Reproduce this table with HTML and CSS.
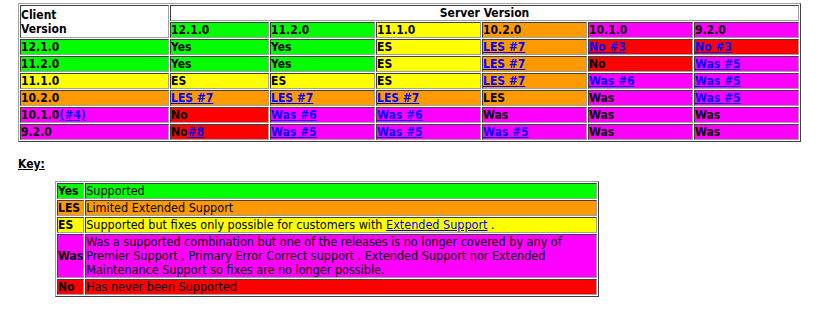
FILE: index.html
```html
<!DOCTYPE html>
<html>
<head>
<meta charset="utf-8">
<link rel="stylesheet" href="styles.css">
</head>
<body>
<div class="page">
<table class="matrix">
  <colgroup>
    <col class="c-client"><col class="c-first"><col class="c-ver"><col class="c-ver"><col class="c-ver"><col class="c-ver"><col class="c-ver">
  </colgroup>
  <tr>
    <th class="client" rowspan="2">Client<br>Version</th>
    <th class="server" colspan="6">Server Version</th>
  </tr>
  <tr>
    <th class="g">12.1.0</th><th class="g">11.2.0</th><th class="y">11.1.0</th><th class="o">10.2.0</th><th class="m">10.1.0</th><th class="m">9.2.0</th>
  </tr>
  <tr>
    <th class="g">12.1.0</th>
    <td class="g">Yes</td><td class="g">Yes</td><td class="y">ES</td><td class="o"><a href="#">LES #7</a></td><td class="r"><a href="#">No #3</a></td><td class="r"><a href="#">No #3</a></td>
  </tr>
  <tr>
    <th class="g">11.2.0</th>
    <td class="g">Yes</td><td class="g">Yes</td><td class="y">ES</td><td class="o"><a href="#">LES #7</a></td><td class="r">No</td><td class="m"><a href="#">Was #5</a></td>
  </tr>
  <tr>
    <th class="y">11.1.0</th>
    <td class="y">ES</td><td class="y">ES</td><td class="y">ES</td><td class="o"><a href="#">LES #7</a></td><td class="m"><a href="#">Was #6</a></td><td class="m"><a href="#">Was #5</a></td>
  </tr>
  <tr>
    <th class="o">10.2.0</th>
    <td class="o"><a href="#">LES #7</a></td><td class="o"><a href="#">LES #7</a></td><td class="o"><a href="#">LES #7</a></td><td class="o">LES</td><td class="m">Was</td><td class="m"><a href="#">Was #5</a></td>
  </tr>
  <tr>
    <th class="m">10.1.0<a href="#">(#4)</a></th>
    <td class="r">No</td><td class="m"><a href="#">Was #6</a></td><td class="m"><a href="#">Was #6</a></td><td class="m">Was</td><td class="m">Was</td><td class="m">Was</td>
  </tr>
  <tr>
    <th class="m">9.2.0</th>
    <td class="r">No<a href="#">#8</a></td><td class="m"><a href="#">Was #5</a></td><td class="m"><a href="#">Was #5</a></td><td class="m"><a href="#">Was #5</a></td><td class="m">Was</td><td class="m">Was</td>
  </tr>
</table>

<p class="keytitle">Key:</p>

<table class="key">
  <tr><th class="g">Yes</th><td class="g">Supported</td></tr>
  <tr><th class="o">LES</th><td class="o">Limited Extended Support</td></tr>
  <tr><th class="y">ES</th><td class="y">Supported but fixes only possible for customers with <a href="#">Extended Support</a> .</td></tr>
  <tr><th class="m">Was</th><td class="m">Was a supported combination but one of the releases is no longer covered by any of Premier Support , Primary Error Correct support , Extended Support nor Extended Maintenance Support so fixes are no longer possible.</td></tr>
  <tr><th class="r">No</th><td class="r">Has never been Supported</td></tr>
</table>
</div>
</body>
</html>
```

FILE: styles.css
```css
html, body {
  margin: 0;
  padding: 0;
  background: #ffffff;
}
.page {
  padding: 3px 0 0 18px;
  font-family: "DejaVu Sans Condensed", "DejaVu Sans", sans-serif;
  font-size: 12px;
  color: #000000;
}
table {
  border-collapse: separate;
  border-spacing: 1px;
  border: 1px solid;
  border-color: #a0a0a0 #404040 #404040 #a0a0a0;
}
th, td {
  border: 1px solid;
  border-color: #404040 #a0a0a0 #a0a0a0 #404040;
  padding: 0;
  line-height: 14px;
  height: 14px;
  text-align: left;
  vertical-align: middle;
  white-space: nowrap;
}
.matrix {
  table-layout: fixed;
  width: 783px;
}
.matrix th, .matrix td {
  font-weight: bold;
  overflow: hidden;
}
.c-client { width: 149px; }
.c-first { width: 99px; }
.c-ver { width: 105px; }
.matrix .server {
  text-align: center;
}
a {
  color: #0000ff;
  text-decoration: underline;
}
.g { background: #00ff00; }
.y { background: #ffff00; }
.o { background: #ff9900; }
.m { background: #ff00ff; }
.r { background: #ff0000; }

.keytitle {
  margin: 15px 0 10px 0;
  font-weight: bold;
  text-decoration: underline;
  line-height: 14px;
}
.key {
  margin-left: 37px;
  width: 544px;
}
.key th {
  font-weight: bold;
  width: 25px;
}
.key td {
  font-weight: normal;
  font-size: 12.5px;
  white-space: normal;
}
```
